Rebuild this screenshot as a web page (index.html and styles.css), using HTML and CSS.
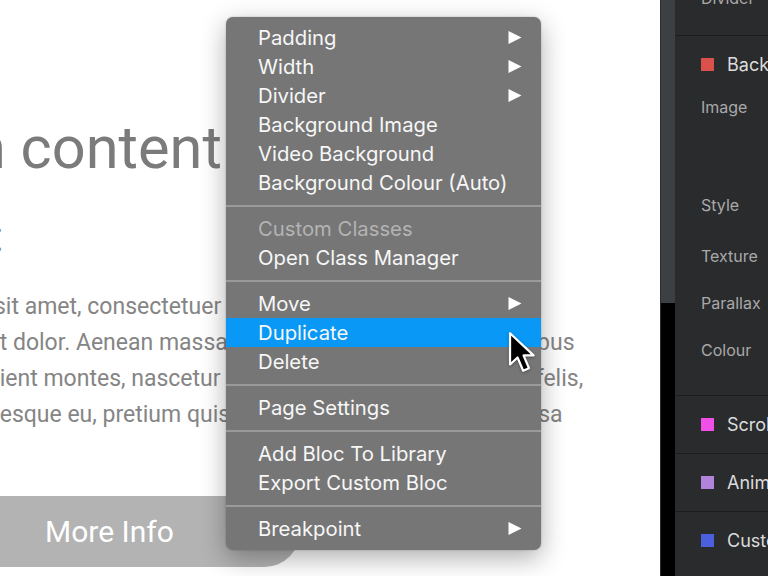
FILE: index.html
```html
<!DOCTYPE html>
<html>
<head>
<meta charset="utf-8">
<link rel="stylesheet" href="styles.css">
</head>
<body>
<div class="app">
  <main class="canvas">
    <div class="page">
      <h1 class="hero">n content</h1>
      <h2 class="sub">t</h2>
      <div class="copy">
        <p class="line">sit amet, consectetuer adipiscing elit. Aenean</p>
        <p class="line"> t dolor. Aenean massa. Cum sociis natoque et penatibus</p>
        <p class="line"> ient montes, nascetur ridiculus mus et. Donec quam felis,</p>
        <p class="line"> esque eu, pretium quis, sem. Nulla consequat et massa</p>
      </div>
      <div class="btn">More Info</div>
    </div>

    <div class="menu">
      <div class="item"><span>Padding</span><svg class="tri" viewBox="0 0 14 14"><polygon points="0,0 14,7 0,14"/></svg></div>
      <div class="item"><span>Width</span><svg class="tri" viewBox="0 0 14 14"><polygon points="0,0 14,7 0,14"/></svg></div>
      <div class="item"><span>Divider</span><svg class="tri" viewBox="0 0 14 14"><polygon points="0,0 14,7 0,14"/></svg></div>
      <div class="item"><span>Background Image</span></div>
      <div class="item"><span>Video Background</span></div>
      <div class="item"><span>Background Colour (Auto)</span></div>
      <div class="sep"></div>
      <div class="item disabled"><span>Custom Classes</span></div>
      <div class="item"><span>Open Class Manager</span></div>
      <div class="sep"></div>
      <div class="item"><span>Move</span><svg class="tri" viewBox="0 0 14 14"><polygon points="0,0 14,7 0,14"/></svg></div>
      <div class="item active"><span>Duplicate</span></div>
      <div class="item"><span>Delete</span></div>
      <div class="sep"></div>
      <div class="item"><span>Page Settings</span></div>
      <div class="sep"></div>
      <div class="item"><span>Add Bloc To Library</span></div>
      <div class="item"><span>Export Custom Bloc</span></div>
      <div class="sep"></div>
      <div class="item"><span>Breakpoint</span><svg class="tri" viewBox="0 0 14 14"><polygon points="0,0 14,7 0,14"/></svg></div>
    </div>

    <svg class="cursor" viewBox="0 0 17 25">
      <path d="M1.2 1.2 L1.2 19.5 L5.6 15.4 L8.9 23.2 L12.3 21.7 L9.1 14.2 L15 14.2 Z" fill="#000" stroke="#fff" stroke-width="1.3" stroke-linejoin="round"/>
    </svg>
  </main>

  <div class="strip">
    <div class="strip-top"></div>
    <div class="strip-bottom"></div>
  </div>

  <aside class="panel">
    <section class="sec sec-cut">
      <div class="label cut">Divider</div>
    </section>
    <section class="sec sec-bg">
      <div class="head"><span class="sq red"></span><span>Background</span></div>
      <div class="label row-image">Image</div>
      <div class="label row-style">Style</div>
      <div class="label row row-texture">Texture</div>
      <div class="label row">Parallax</div>
      <div class="label row">Colour</div>
    </section>
    <section class="sec">
      <div class="head"><span class="sq pink"></span><span>Scroll</span></div>
    </section>
    <section class="sec">
      <div class="head"><span class="sq purple"></span><span>Animation</span></div>
    </section>
    <section class="sec last">
      <div class="head"><span class="sq blue"></span><span>Custom</span></div>
    </section>
  </aside>
</div>
</body>
</html>
```

FILE: styles.css
```css
* { box-sizing: border-box; }
html, body { margin: 0; padding: 0; }
body {
  width: 768px;
  height: 576px;
  overflow: hidden;
  background: #ffffff;
}
.app {
  display: flex;
  width: 768px;
  height: 576px;
}

/* ---------- canvas ---------- */
.canvas {
  position: relative;
  width: 660px;
  height: 576px;
  background: #ffffff;
  overflow: hidden;
  flex: none;
}
.page {
  display: flex;
  flex-direction: column;
  padding-top: 119px;
  font-family: Roboto, "Liberation Sans", sans-serif;
  color: #7b7b7b;
}
.hero {
  margin: 0 0 0 -27px;
  font-size: 59.5px;
  line-height: 58px;
  font-weight: 400;
  white-space: nowrap;
}
.sub {
  margin: 41px 0 0 -11px;
  font-size: 40px;
  line-height: 40px;
  font-weight: 400;
}
.copy {
  margin-top: 31px;
  margin-left: -6px;
}
.line {
  margin: 0;
  font-size: 23px;
  line-height: 36px;
  white-space: pre;
  color: #858585;
}
.btn {
  margin-top: 63px;
  width: 300px;
  height: 71px;
  line-height: 71px;
  padding-left: 45px;
  background: #b3b3b3;
  color: #ffffff;
  font-size: 30px;
  border-radius: 0 36px 36px 0;
}

/* ---------- context menu ---------- */
.menu {
  position: absolute;
  left: 226px;
  top: 17px;
  width: 315px;
  padding: 6px 0 7px;
  background: #767676;
  border-radius: 7px;
  box-shadow: 0 8px 26px rgba(0,0,0,0.32), 0 0 2px rgba(0,0,0,0.25);
  font-family: Inter, "Open Sans", sans-serif;
  font-size: 20.3px;
  color: #f7f7f7;
}
.item {
  display: flex;
  align-items: center;
  justify-content: space-between;
  height: 29px;
  padding: 0 19px 0 32px;
  white-space: nowrap;
}
.item.disabled { color: #b3b3b3; }
.item.active { background: #0998f6; }
.tri {
  width: 14px;
  height: 13px;
  fill: #ffffff;
}
.sep {
  height: 2px;
  margin: 8px 0 7px;
  background: #9a9a9a;
}
.cursor {
  position: absolute;
  left: 508px;
  top: 331px;
  width: 29px;
  height: 43px;
  filter: drop-shadow(0 1px 1.5px rgba(0,0,0,0.35));
}

/* ---------- strip ---------- */
.strip {
  width: 15px;
  flex: none;
  display: flex;
  flex-direction: column;
  border-left: 1px solid #2b2e30;
}
.strip-top { height: 303px; background: #3d4042; }
.strip-bottom { flex: 1; background: #000000; }

/* ---------- right panel ---------- */
.panel {
  flex: 1;
  background: #2a2b2d;
  overflow: hidden;
  font-family: Inter, "Open Sans", sans-serif;
  display: flex;
  flex-direction: column;
}
.sec {
  border-bottom: 1px solid #1c1d1f;
  padding-left: 26px;
}
.sec-cut { height: 36px; }
.cut {
  margin-top: -12px;
  color: #a9a9a9;
  font-size: 16px;
  line-height: 20px;
}
.sec-bg { height: 360px; }
.head {
  display: flex;
  align-items: center;
  gap: 13px;
  height: 57px;
  color: #dcdcdc;
  font-size: 18px;
  white-space: nowrap;
}
.sq {
  width: 13px;
  height: 13px;
  flex: none;
}
.red { background: #d9514a; }
.pink { background: #f04fe8; }
.purple { background: #b183da; }
.blue { background: #4c5fdc; }
.label {
  color: #a9a9a9;
  font-size: 16px;
  white-space: nowrap;
}
.row-image { height: 28px; line-height: 28px; }
.row-style { height: 47px; line-height: 47px; margin-top: 61px; }
.row { height: 47px; line-height: 47px; }
.row-texture { margin-top: 4px; }
.last { border-bottom: none; }
```
